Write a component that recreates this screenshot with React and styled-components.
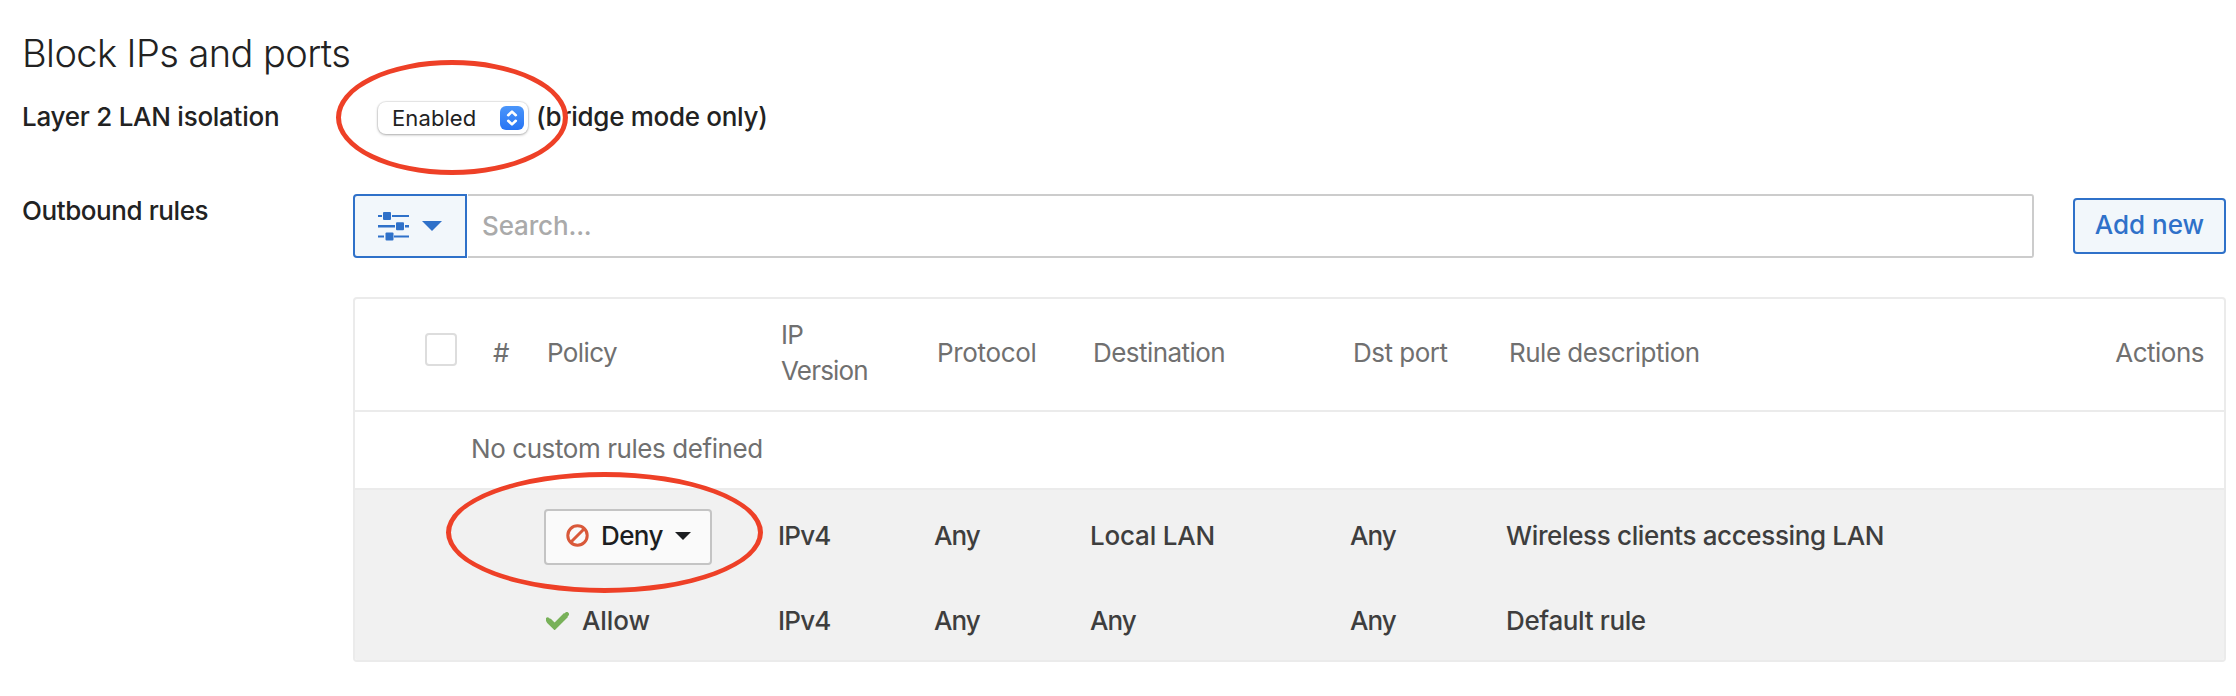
import React, { useState } from "react";
import styled, { createGlobalStyle } from "styled-components";

const headers = [
  { label: "Policy", track: "-0.6px" },
  { label: "IP Version", track: "-0.8px", narrow: true },
  { label: "Protocol", track: "-0.35px" },
  { label: "Destination", track: "-0.55px" },
  { label: "Dst port", track: "-0.5px" },
  { label: "Rule description", track: "-0.5px" },
];

const rules = [
  {
    policy: "Deny",
    editable: true,
    cells: ["IPv4", "Any", "Local LAN", "Any", "Wireless clients accessing LAN"],
  },
  {
    policy: "Allow",
    editable: false,
    cells: ["IPv4", "Any", "Any", "Any", "Default rule"],
  },
];

const cellTrack = { IPv4: "-0.8px", Any: "-0.9px", "Local LAN": "-0.2px" };

const SlidersIcon = () => (
  <svg width='32' height='30' viewBox='0 0 32 30' fill='#2f71c9'>
    <path d='M0 4h4v2H0zM14 4h17v2H14zM0 14h17v2.5H0zM27 14h4v2.5h-4zM0 24.5h6v2H0zM16 24.5h15v2H16z' />
    <rect x='5' y='1' width='8' height='8' rx='1' />
    <rect x='18' y='11.2' width='8' height='8' rx='1' />
    <rect x='7.5' y='21.5' width='8' height='8' rx='1' />
  </svg>
);

const Caret = ({ width, height, color }) => (
  <svg width={width} height={height} viewBox='0 0 20 10' preserveAspectRatio='none' fill={color}>
    <path d='M0 0h20L10 10z' />
  </svg>
);

const DenyIcon = () => (
  <svg width='23' height='23' viewBox='0 0 23 23' fill='none' stroke='#d9593a' strokeWidth='3'>
    <circle cx='11.5' cy='11.5' r='9.7' />
    <path d='M5 18L18 5' />
  </svg>
);

const CheckIcon = () => (
  <svg width='23' height='18' viewBox='0 0 23 18' fill='none'>
    <path
      d='M2.6 8.6L8.6 14.4L20 3'
      stroke='#78b159'
      strokeWidth='5.6'
      strokeLinejoin='miter'
    />
    <path d='M1.6 7.6L3.4 9.4M19 4L20.8 2.2' stroke='#78b159' strokeWidth='4.4' strokeLinecap='round' />
  </svg>
);

const App = () => {
  const [search, setSearch] = useState("");

  return (
    <>
      <GlobalStyle />
      <Page>
        <Title>Block IPs and ports</Title>

        <IsolationRow>
          <Label $track='-0.26px'>Layer 2 LAN isolation</Label>
          <IsolationField>
            <Select type='button'>
              <span>Enabled</span>
              <Stepper>
                <svg width='24' height='24' viewBox='0 0 24 24' fill='none' stroke='#fff' strokeWidth='2.6' strokeLinecap='round' strokeLinejoin='round'>
                  <path d='M8.2 9.2L12 5.6l3.8 3.6M8.2 14.8L12 18.4l3.8-3.6' />
                </svg>
              </Stepper>
            </Select>
            <Label $track='-0.3px'>(bridge mode only)</Label>
          </IsolationField>
        </IsolationRow>

        <RulesRow>
          <Label $track='-0.42px'>Outbound rules</Label>
          <div>
            <Toolbar>
              <FilterButton type='button'>
                <SlidersIcon />
                <Caret width={20} height={10} color='#2f71c9' />
              </FilterButton>
              <SearchInput
                placeholder='Search...'
                value={search}
                onChange={(e) => setSearch(e.target.value)}
              />
              <AddButton type='button'>Add new</AddButton>
            </Toolbar>

            <Table>
              <HeaderRow>
                <Checkbox />
                <HeaderCell>#</HeaderCell>
                {headers.map(({ label, track, narrow }) => (
                  <HeaderCell key={label} $track={track} $narrow={narrow}>
                    {label}
                  </HeaderCell>
                ))}
                <ActionsCell $track='-0.5px'>Actions</ActionsCell>
              </HeaderRow>
              <EmptyRow>No custom rules defined</EmptyRow>
              <FixedRules>
                {rules.map(({ policy, editable, cells }) => (
                  <RuleRow key={policy}>
                    {editable ? (
                      <PolicyButton type='button'>
                        <DenyIcon />
                        <span>{policy}</span>
                        <Caret width={16} height={8} color='#1c1e21' />
                      </PolicyButton>
                    ) : (
                      <PolicyLabel>
                        <CheckIcon />
                        {policy}
                      </PolicyLabel>
                    )}
                    {cells.map((cell, index) => (
                      <Cell key={index} $track={cellTrack[cell]}>
                        {cell}
                      </Cell>
                    ))}
                  </RuleRow>
                ))}
              </FixedRules>
            </Table>
          </div>
        </RulesRow>

        <Highlight $left={336} $top={60} $width={232} $height={115} />
        <Highlight $left={446} $top={472} $width={317} $height={121} />
      </Page>
    </>
  );
};

const GlobalStyle = createGlobalStyle`
  * {
    box-sizing: border-box;
  }
  body {
    margin: 0;
    background: #fff;
  }
  button,
  input {
    margin: 0;
    font: inherit;
  }
  svg {
    display: block;
    flex: none;
  }
`;

const Page = styled.main`
  position: relative;
  height: 696px;
  padding: 30px 10px 0 22px;
  overflow: hidden;
  color: #222;
  font: 450 26px/36px Inter, "Liberation Sans", sans-serif;
`;

const Title = styled.h1`
  margin: 0;
  font-size: 38px;
  font-weight: 300;
  line-height: 46px;
  letter-spacing: -0.58px;
`;

const FieldRow = styled.div`
  display: grid;
  grid-template-columns: 331px 1fr;
`;

const IsolationRow = styled(FieldRow)`
  margin-top: 23px;
  height: 36px;
`;

const RulesRow = styled(FieldRow)`
  margin-top: 58px;
`;

const Label = styled.div`
  letter-spacing: ${({ $track }) => $track};
  white-space: nowrap;
`;

const IsolationField = styled.div`
  display: flex;
  gap: 8px;
  padding-left: 25px;
`;

const Select = styled.button`
  display: flex;
  align-items: center;
  justify-content: space-between;
  width: 150px;
  height: 32px;
  margin-top: 3px;
  padding: 0 4px 0 14px;
  border: 0;
  border-radius: 8px;
  background: #fff;
  box-shadow: 0 0 1px 1px rgba(0, 0, 0, 0.08), 0 1px 3px rgba(0, 0, 0, 0.28);
  color: #222;
  font-size: 22px;
  font-weight: 400;
  line-height: 32px;
  letter-spacing: 0.1px;
`;

const Stepper = styled.span`
  border-radius: 6px;
  background: linear-gradient(#4b96fa, #2774f4);
`;

const Toolbar = styled.div`
  display: flex;
  align-items: center;
  height: 64px;
  margin-top: 1px;
`;

const FilterButton = styled.button`
  display: flex;
  align-items: center;
  gap: 12px;
  width: 114px;
  height: 64px;
  padding: 0 0 0 23px;
  border: 2px solid #2f71c9;
  border-radius: 4px 0 0 4px;
  background: #f2f7fb;
`;

const SearchInput = styled.input`
  flex: 1;
  height: 64px;
  margin-left: 1px;
  padding: 0 14px 2px;
  border: 2px solid #ccc;
  border-left: 0;
  border-radius: 0 3px 3px 0;
  outline: none;
  letter-spacing: -0.15px;
  &::placeholder {
    color: #aaa;
    opacity: 1;
  }
`;

const AddButton = styled.button`
  width: 153px;
  height: 56px;
  margin-left: 39px;
  padding: 0 0 2px;
  border: 2px solid #2f71c9;
  border-radius: 4px;
  background: #f2f7fb;
  color: #2f71c9;
  font-weight: 500;
`;

const Table = styled.section`
  margin-top: 39px;
  border: 2px solid #ebebeb;
  border-radius: 4px;
  overflow: hidden;
`;

const columns = "234px 156px 156px 260px 156px 1fr";

const HeaderRow = styled.div`
  display: grid;
  grid-template-columns: 65px 54px ${columns} 120px;
  align-items: center;
  height: 113px;
  padding: 0 20px 4px 70px;
  border-bottom: 2px solid #ebebeb;
  color: #707070;
  font-weight: 400;
`;

const Checkbox = styled.div`
  width: 32px;
  height: 33px;
  margin-bottom: 6px;
  border: 2px solid #ddd;
  border-radius: 4px;
`;

const HeaderCell = styled.div`
  padding-left: 3px;
  padding-right: ${({ $narrow }) => ($narrow ? "50px" : "0")};
  letter-spacing: ${({ $track }) => $track};
`;

const ActionsCell = styled(HeaderCell)`
  text-align: right;
`;

const EmptyRow = styled.div`
  height: 78px;
  padding: 19px 0 0 116px;
  border-bottom: 2px solid #ebebeb;
  color: #707070;
  font-weight: 400;
  letter-spacing: -0.42px;
`;

const FixedRules = styled.div`
  display: grid;
  gap: 6px;
  height: 170px;
  padding-top: 6px;
  background: #f1f1f1;
`;

const RuleRow = styled.div`
  display: grid;
  grid-template-columns: ${columns};
  align-items: center;
  height: 79px;
  padding-left: 189px;
  color: #3e3e3e;
`;

const Cell = styled.div`
  letter-spacing: ${({ $track }) => $track || "-0.36px"};
`;

const PolicyButton = styled.button`
  display: flex;
  align-items: center;
  gap: 12px;
  width: 168px;
  height: 56px;
  margin-top: 3px;
  padding: 0 0 3px 20px;
  border: 2px solid #c4c4c4;
  border-radius: 4px;
  background: #fafafa;
  color: #1c1e21;
  letter-spacing: -0.6px;
`;

const PolicyLabel = styled.div`
  display: flex;
  align-items: center;
  gap: 13px;
  padding-left: 2px;
  letter-spacing: -0.1px;
`;

// marker ring laid over the page
const Highlight = styled.div`
  position: absolute;
  left: ${({ $left }) => $left}px;
  top: ${({ $top }) => $top}px;
  width: ${({ $width }) => $width}px;
  height: ${({ $height }) => $height}px;
  border: 5px solid #ee4027;
  border-radius: 50%;
  pointer-events: none;
`;

export default App;
